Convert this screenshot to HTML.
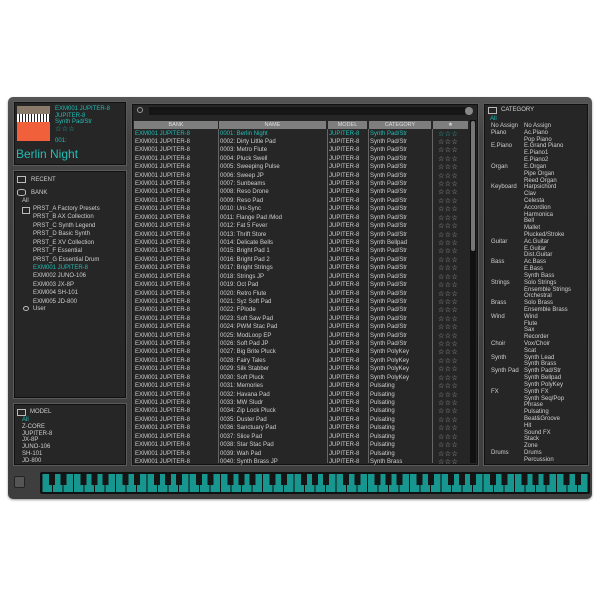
<!DOCTYPE html>
<html><head><meta charset="utf-8"><style>
*{margin:0;padding:0;box-sizing:border-box}
body{width:600px;height:600px;background:#fff;position:relative;overflow:hidden;font-family:"Liberation Sans",sans-serif;color:#cfcfcf}
.frame{position:absolute;left:8px;top:97px;width:584px;height:402px;background:linear-gradient(#555,#444 10%,#3e3e3e);border-radius:5px;box-shadow:0 1px 2px #999}
.pnl{position:absolute;background:#262626;border:1px solid #111;box-shadow:0 0 0 1px #5a5a5a}
.t{position:absolute;font-size:6px;line-height:8.42px;white-space:nowrap}
.c{color:#22bdb5}
.cat{position:absolute;font-size:6px;line-height:6.82px;white-space:nowrap}
.hd{position:absolute;top:121px;height:8px;background:#7e7e7e;color:#ddd;font-size:5.5px;line-height:8px;text-align:center}
.st{font-family:"DejaVu Sans",sans-serif;font-size:7px;letter-spacing:0.5px;color:#aaa}
</style></head><body>
<div class="frame"></div>
<!-- info -->
<div class="pnl" style="left:14px;top:102px;width:112px;height:63px"></div>
<div style="position:absolute;left:17px;top:106px;width:33px;height:35px;background:#ddd">
 <div style="height:8px;background:#8a7a6a"></div>
 <div style="height:8px;background:repeating-linear-gradient(90deg,#fff 0 2px,#222 2px 3px)"></div>
 <div style="height:19px;background:#f0603a"></div>
</div>
<div class="t c" style="left:55px;top:106px;line-height:6.5px">EXM001 JUPITER-8<br>JUPITER-8<br>Synth Pad/Str</div>
<div class="t c st" style="left:55px;top:125px;color:#22bdb5">☆☆☆</div>
<div class="t c" style="left:55px;top:137px">001:</div>
<div class="t c" style="left:16px;top:147px;font-size:12px;line-height:14px">Berlin Night</div>
<!-- bank -->
<div class="pnl" style="left:14px;top:171px;width:112px;height:227px"></div>
<div style="position:absolute;left:17px;top:176px;width:9px;height:7px;border:1px solid #bbb"></div>
<div class="t" style="left:31px;top:176px">RECENT</div>
<div style="position:absolute;left:17px;top:189px;width:9px;height:7px;border:1px solid #bbb;border-radius:4px/2px"></div>
<div class="t" style="left:31px;top:189px">BANK</div>
<div class="t" style="left:22px;top:197px">All</div>
<div style="position:absolute;left:22px;top:207px;width:8px;height:7px;border:1px solid #bbb"></div>
<div class="t" style="left:33px;top:205px">PRST_A Factory Presets<br>PRST_B AX Collection<br>PRST_C Synth Legend<br>PRST_D Basic Synth<br>PRST_E XV Collection<br>PRST_F Essential<br>PRST_G Essential Drum<br><span class="c">EXM001 JUPITER-8</span><br>EXM002 JUNO-106<br>EXM003 JX-8P<br>EXM004 SH-101<br>EXM005 JD-800</div>
<div style="position:absolute;left:23px;top:306px;width:6px;height:5px;border:1px solid #bbb;border-radius:50%"></div>
<div class="t" style="left:33px;top:305px">User</div>
<!-- model -->
<div class="pnl" style="left:14px;top:404px;width:112px;height:61px"></div>
<div style="position:absolute;left:17px;top:409px;width:9px;height:7px;border:1px solid #bbb"></div>
<div class="t" style="left:30px;top:408px">MODEL</div>
<div class="cat" style="left:22px;top:417px"><span class="c">All</span><br>Z-CORE<br>JUPITER-8<br>JX-8P<br>JUNO-106<br>SH-101<br>JD-800</div>
<!-- list -->
<div class="pnl" style="left:132px;top:104px;width:346px;height:361px"></div>
<div style="position:absolute;left:137px;top:107px;width:6px;height:6px;border:1.3px solid #999;border-radius:50%"></div>
<div style="position:absolute;left:149px;top:107px;width:316px;height:8px;background:#161616"></div>
<div style="position:absolute;left:465px;top:107px;width:8px;height:8px;border-radius:50%;background:#888"></div>
<div class="hd" style="left:134px;width:84px">BANK</div>
<div class="hd" style="left:219px;width:107px">NAME</div>
<div class="hd" style="left:328px;width:39px">MODEL</div>
<div class="hd" style="left:369px;width:62px">CATEGORY</div>
<div class="hd" style="left:433px;width:35px">★</div>
<div style="position:absolute;left:218px;top:129px;width:1px;height:334px;background:#666"></div>
<div style="position:absolute;left:327px;top:129px;width:1px;height:334px;background:#666"></div>
<div style="position:absolute;left:368px;top:129px;width:1px;height:334px;background:#666"></div>
<div style="position:absolute;left:432px;top:129px;width:1px;height:334px;background:#666"></div>
<div style="position:absolute;left:470px;top:120px;width:6px;height:343px;background:#111"></div>
<div style="position:absolute;left:471px;top:121px;width:4px;height:130px;background:#777;border-radius:2px"></div>
<div class="t" style="left:135px;top:129.5px"><span class="c">EXM001 JUPITER-8</span><br>EXM001 JUPITER-8<br>EXM001 JUPITER-8<br>EXM001 JUPITER-8<br>EXM001 JUPITER-8<br>EXM001 JUPITER-8<br>EXM001 JUPITER-8<br>EXM001 JUPITER-8<br>EXM001 JUPITER-8<br>EXM001 JUPITER-8<br>EXM001 JUPITER-8<br>EXM001 JUPITER-8<br>EXM001 JUPITER-8<br>EXM001 JUPITER-8<br>EXM001 JUPITER-8<br>EXM001 JUPITER-8<br>EXM001 JUPITER-8<br>EXM001 JUPITER-8<br>EXM001 JUPITER-8<br>EXM001 JUPITER-8<br>EXM001 JUPITER-8<br>EXM001 JUPITER-8<br>EXM001 JUPITER-8<br>EXM001 JUPITER-8<br>EXM001 JUPITER-8<br>EXM001 JUPITER-8<br>EXM001 JUPITER-8<br>EXM001 JUPITER-8<br>EXM001 JUPITER-8<br>EXM001 JUPITER-8<br>EXM001 JUPITER-8<br>EXM001 JUPITER-8<br>EXM001 JUPITER-8<br>EXM001 JUPITER-8<br>EXM001 JUPITER-8<br>EXM001 JUPITER-8<br>EXM001 JUPITER-8<br>EXM001 JUPITER-8<br>EXM001 JUPITER-8<br>EXM001 JUPITER-8</div>
<div class="t" style="left:220px;top:129.5px"><span class="c">0001: Berlin Night</span><br>0002: Dirty Little Pad<br>0003: Metro Flute<br>0004: Pluck Swell<br>0005: Sweeping Pulse<br>0006: Sweep JP<br>0007: Sunbeams<br>0008: Reso Drone<br>0009: Reso Pad<br>0010: Uni-Sync<br>0011: Flange Pad /Mod<br>0012: Fat 5 Fever<br>0013: Thrift Store<br>0014: Delicate Bells<br>0015: Bright Pad 1<br>0016: Bright Pad 2<br>0017: Bright Strings<br>0018: Strings JP<br>0019: Oct Pad<br>0020: Retro Flute<br>0021: Syz Soft Pad<br>0022: FPlode<br>0023: Soft Saw Pad<br>0024: PWM Stac Pad<br>0025: ModLoop EP<br>0026: Soft Pad JP<br>0027: Big Brite Pluck<br>0028: Fairy Tales<br>0029: Silk Stabber<br>0030: Soft Pluck<br>0031: Memories<br>0032: Havana Pad<br>0033: MW Sludr<br>0034: Zip Lock Pluck<br>0035: Duster Pad<br>0036: Sanctuary Pad<br>0037: Slice Pad<br>0038: Star Stac Pad<br>0039: Wah Pad<br>0040: Synth Brass JP</div>
<div class="t" style="left:329px;top:129.5px"><span class="c">JUPITER-8</span><br>JUPITER-8<br>JUPITER-8<br>JUPITER-8<br>JUPITER-8<br>JUPITER-8<br>JUPITER-8<br>JUPITER-8<br>JUPITER-8<br>JUPITER-8<br>JUPITER-8<br>JUPITER-8<br>JUPITER-8<br>JUPITER-8<br>JUPITER-8<br>JUPITER-8<br>JUPITER-8<br>JUPITER-8<br>JUPITER-8<br>JUPITER-8<br>JUPITER-8<br>JUPITER-8<br>JUPITER-8<br>JUPITER-8<br>JUPITER-8<br>JUPITER-8<br>JUPITER-8<br>JUPITER-8<br>JUPITER-8<br>JUPITER-8<br>JUPITER-8<br>JUPITER-8<br>JUPITER-8<br>JUPITER-8<br>JUPITER-8<br>JUPITER-8<br>JUPITER-8<br>JUPITER-8<br>JUPITER-8<br>JUPITER-8</div>
<div class="t" style="left:370px;top:129.5px"><span class="c">Synth Pad/Str</span><br>Synth Pad/Str<br>Synth Pad/Str<br>Synth Pad/Str<br>Synth Pad/Str<br>Synth Pad/Str<br>Synth Pad/Str<br>Synth Pad/Str<br>Synth Pad/Str<br>Synth Pad/Str<br>Synth Pad/Str<br>Synth Pad/Str<br>Synth Pad/Str<br>Synth Bellpad<br>Synth Pad/Str<br>Synth Pad/Str<br>Synth Pad/Str<br>Synth Pad/Str<br>Synth Pad/Str<br>Synth Pad/Str<br>Synth Pad/Str<br>Synth Pad/Str<br>Synth Pad/Str<br>Synth Pad/Str<br>Synth Pad/Str<br>Synth Pad/Str<br>Synth PolyKey<br>Synth PolyKey<br>Synth PolyKey<br>Synth PolyKey<br>Pulsating<br>Pulsating<br>Pulsating<br>Pulsating<br>Pulsating<br>Pulsating<br>Pulsating<br>Pulsating<br>Pulsating<br>Synth Brass</div>
<div class="t st" style="left:438px;top:129.5px"><span class="c">☆☆☆</span><br>☆☆☆<br>☆☆☆<br>☆☆☆<br>☆☆☆<br>☆☆☆<br>☆☆☆<br>☆☆☆<br>☆☆☆<br>☆☆☆<br>☆☆☆<br>☆☆☆<br>☆☆☆<br>☆☆☆<br>☆☆☆<br>☆☆☆<br>☆☆☆<br>☆☆☆<br>☆☆☆<br>☆☆☆<br>☆☆☆<br>☆☆☆<br>☆☆☆<br>☆☆☆<br>☆☆☆<br>☆☆☆<br>☆☆☆<br>☆☆☆<br>☆☆☆<br>☆☆☆<br>☆☆☆<br>☆☆☆<br>☆☆☆<br>☆☆☆<br>☆☆☆<br>☆☆☆<br>☆☆☆<br>☆☆☆<br>☆☆☆<br>☆☆☆</div>
<!-- category -->
<div class="pnl" style="left:484px;top:104px;width:104px;height:361px"></div>
<div style="position:absolute;left:488px;top:107px;width:9px;height:7px;border:1px solid #bbb"></div>
<div class="t" style="left:501px;top:106px">CATEGORY</div>
<div class="t c" style="left:490px;top:115px">All</div>
<div class="cat" style="left:491px;top:123px">No Assign<br>Piano<br><br>E.Piano<br><br><br>Organ<br><br><br>Keyboard<br><br><br><br><br><br><br><br>Guitar<br><br><br>Bass<br><br><br>Strings<br><br><br>Brass<br><br>Wind<br><br><br><br>Choir<br><br>Synth<br><br>Synth Pad<br><br><br>FX<br><br><br><br><br><br><br><br><br>Drums</div>
<div class="cat" style="left:524px;top:123px">No Assign<br>Ac.Piano<br>Pop Piano<br>E.Grand Piano<br>E.Piano1<br>E.Piano2<br>E.Organ<br>Pipe Organ<br>Reed Organ<br>Harpsichord<br>Clav<br>Celesta<br>Accordion<br>Harmonica<br>Bell<br>Mallet<br>Plucked/Stroke<br>Ac.Guitar<br>E.Guitar<br>Dist.Guitar<br>Ac.Bass<br>E.Bass<br>Synth Bass<br>Solo Strings<br>Ensemble Strings<br>Orchestral<br>Solo Brass<br>Ensemble Brass<br>Wind<br>Flute<br>Sax<br>Recorder<br>Vox/Choir<br>Scat<br>Synth Lead<br>Synth Brass<br>Synth Pad/Str<br>Synth Bellpad<br>Synth PolyKey<br>Synth FX<br>Synth Seq/Pop<br>Phrase<br>Pulsating<br>Beat&amp;Groove<br>Hit<br>Sound FX<br>Stack<br>Zone<br>Drums<br>Percussion</div>
<!-- keyboard -->
<div style="position:absolute;left:14px;top:476px;width:11px;height:12px;background:#555;border:1px solid #222;border-radius:2px"></div>
<div style="position:absolute;left:40px;top:472px;width:550px;height:22px;background:#111;border-radius:2px"></div>
<svg style="position:absolute;left:42px;top:474px" width="546" height="18">
<defs><pattern id="k" width="73.5" height="18" patternUnits="userSpaceOnUse">
<g fill="#17968f"><rect x="0.5" y="0" width="9.5" height="18"/><rect x="11" y="0" width="9.5" height="18"/><rect x="21.5" y="0" width="9.5" height="18"/><rect x="32" y="0" width="9.5" height="18"/><rect x="42.5" y="0" width="9.5" height="18"/><rect x="53" y="0" width="9.5" height="18"/><rect x="63.5" y="0" width="9.5" height="18"/></g>
<g fill="#151515"><rect x="7" y="0" width="6" height="11"/><rect x="18.5" y="0" width="6" height="11"/><rect x="38.5" y="0" width="6" height="11"/><rect x="49.5" y="0" width="6" height="11"/><rect x="60.5" y="0" width="6" height="11"/></g>
</pattern></defs>
<rect width="546" height="18" fill="url(#k)"/>
</svg>
</body></html>
